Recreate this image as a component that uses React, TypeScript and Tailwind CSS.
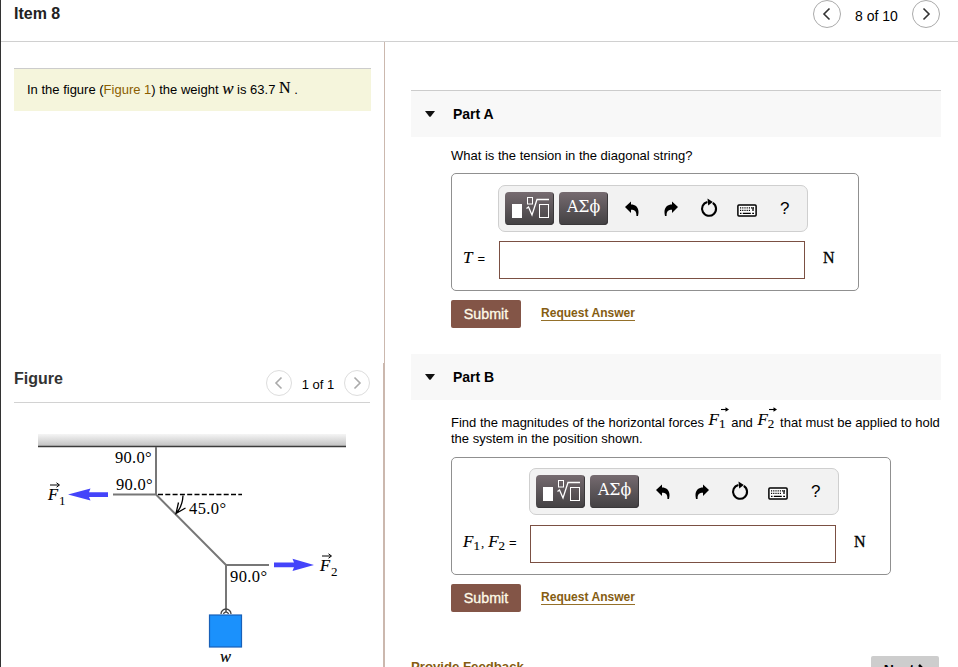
import type { ReactNode } from 'react';

const serif = "font-['Liberation_Serif',serif]";

function Chevron({ dir }: { dir: 'left' | 'right' }) {
  return (
    <svg width="12" height="14" viewBox="0 0 12 14" fill="none" stroke="currentColor" strokeWidth="1.6">
      <path d={dir === 'left' ? 'M8.5 1.5 L3 7 L8.5 12.5' : 'M3.5 1.5 L9 7 L3.5 12.5'} />
    </svg>
  );
}

function Toolbar() {
  const key =
    'h-[33px] w-[49px] rounded-[4px] bg-gradient-to-b from-[#766b70] to-[#434143] shadow-[inset_-1px_-1px_0_#3a383a] flex items-center justify-center';
  return (
    <div className="flex h-[47px] w-[310px] items-center rounded-[7px] border border-[#cfcfcf] bg-[#f2f2f2] pl-[6px]">
      <div className={key}>
        <svg width="49" height="33" viewBox="0 0 49 33" fill="none" stroke="#fff">
          <rect x="7" y="12" width="10" height="14" fill="#fff" stroke="none" />
          <rect x="22.5" y="5.5" width="5" height="6.5" />
          <path d="M21.5 16.5 L23.5 15 L27 23 L32 7.5 H44" strokeWidth="1.3" />
          <rect x="34.5" y="12.5" width="9" height="13" />
        </svg>
      </div>
      <div className={`ml-[5px] ${key}`}>
        <span className="-mt-[3px] font-['DejaVu_Serif_Condensed','DejaVu_Serif',serif] text-[17.5px] leading-none text-white">ΑΣϕ</span>
      </div>
      <svg className="ml-[17px]" width="14" height="16" viewBox="0 0 14 16">
        <path d="M0 6 L6 0.5 V3.5 C11 3.5 15 7 13 15 H11.4 C11.6 10.5 10 8.8 6 8.8 V12 Z" />
      </svg>
      <svg className="ml-[25px]" width="14" height="16" viewBox="0 0 14 16">
        <path d="M14 6 L8 0.5 V3.5 C3 3.5 -1 7 1 15 H2.6 C2.4 10.5 4 8.8 8 8.8 V12 Z" />
      </svg>
      <svg className="-mt-px ml-[22px]" width="18" height="20" viewBox="0 0 18 20">
        <path d="M12.8 4.9 A7 7 0 1 1 7.4 4" fill="none" stroke="#000" strokeWidth="2.1" />
        <path d="M7.5 0.6 L12.8 4 L8.2 7.6 Z" />
      </svg>
      <svg className="mt-[3px] ml-[19px]" width="20" height="13" viewBox="0 0 20 13">
        <rect x="0.9" y="0.9" width="18.2" height="11.2" rx="1" fill="#fff" stroke="#000" strokeWidth="1.5" />
        <path d="M3 3.8 H17 M3 6.4 H14" stroke="#000" strokeWidth="1.3" strokeDasharray="1.2 1" />
        <path d="M3 9.3 H4.5 M5.8 9.3 H13.8 M15.2 9.3 H17 M16 3.2 V7" stroke="#000" strokeWidth="1.3" />
      </svg>
      <span className="-mt-px ml-[23px] text-[17px] leading-none">?</span>
    </div>
  );
}

function PartHeader({ title, first }: { title: string; first?: boolean }) {
  return (
    <div className={`flex w-[530px] items-center bg-[#f8f8f8] pl-[14px] ${first ? 'h-[47px] border-t border-[#ccc]' : 'h-[46px]'}`}>
      <svg width="10" height="6" viewBox="0 0 10 6">
        <path d="M0 0 H10 L5.8 5.4 Q5 6 4.2 5.4 Z" fill="#111" />
      </svg>
      <h2 className="ml-[18px] text-[14px] leading-[16px] font-bold">{title}</h2>
    </div>
  );
}

function Answer({ label, wide }: { label: ReactNode; wide?: boolean }) {
  return (
    <>
      <div className={`ml-[40px] h-[118px] rounded-[5px] border border-[#909090] ${wide ? 'w-[440px] pt-[10px]' : 'w-[408px] pt-[11px]'}`}>
        <div className={wide ? 'ml-[77px]' : 'ml-[46px]'}>
          <Toolbar />
        </div>
        <div className={`flex items-center ${wide ? 'mt-[10px]' : 'mt-[9px]'}`}>
          <div className={`-mt-[3px] shrink-0 pl-[11px] whitespace-nowrap ${wide ? 'w-[78px]' : 'w-[47px]'}`}>{label}</div>
          <div className="h-[38px] w-[306px] shrink-0 border border-[#7b5043] bg-white" />
          <span className={`-mt-[5px] ml-[18px] text-[16px] leading-none [-webkit-text-stroke:0.3px_black] ${serif}`}>N</span>
        </div>
      </div>
      <div className="mt-[9px] ml-[40px] flex h-[28px] items-center">
        <button className="h-[28px] w-[70px] rounded-[2px] bg-[#835547] text-[14.3px] leading-none text-[#fffbe8] [-webkit-text-stroke:0.3px_#fffbe8]">Submit</button>
        <a className="-mt-px ml-[20px] border-b border-[#94702a] text-[12.05px] leading-[13px] font-bold whitespace-nowrap text-[#855d12]">Request Answer</a>
      </div>
    </>
  );
}

function MathVar({ name, sub }: { name: string; sub?: string }) {
  return (
    <span className={`text-[17px] leading-none [-webkit-text-stroke:0.15px_black] ${serif}`}>
      <i>{name}</i>
      {sub && <span className="relative top-[3px] text-[13px]">{sub}</span>}
    </span>
  );
}

function VectorVar({ sub }: { sub: string }) {
  return (
    <span className="relative mx-[1px] inline-block h-[12px] w-[18px]">
      <span className="absolute -top-[4px] left-0 leading-none whitespace-nowrap">
        <MathVar name="F" sub={sub} />
      </span>
      <svg className="absolute -top-[8px] left-[12px]" width="8" height="5" viewBox="0 0 8 5">
        <path d="M0 2.5 H6" stroke="#000" strokeWidth="1.1" />
        <path d="M4.5 0.2 L8 2.5 L4.5 4.8 Z" />
      </svg>
    </span>
  );
}

function Diagram() {
  return (
    <svg className="mt-[29px] ml-[23px] font-['Liberation_Serif',serif]" width="320" height="236" viewBox="37 432 320 236">
      <defs>
        <linearGradient id="ceiling" x1="0" y1="0" x2="0" y2="1">
          <stop offset="0" stopColor="#f5f5f5" />
          <stop offset="1" stopColor="#c2c2c2" />
        </linearGradient>
      </defs>
      <rect x="38" y="434" width="308" height="12" fill="url(#ceiling)" />
      <path d="M38 446.5 H346" stroke="#3c3c3c" strokeWidth="1.5" />
      <path d="M156 447 V495 M113 494.5 H156 L226 565 H269 M226 565 V612" fill="none" stroke="#777" strokeWidth="2" />
      <path d="M158 494.5 H242" stroke="#000" strokeWidth="1.4" strokeDasharray="5 2.3" />
      <path d="M183 495.5 Q182.5 506 176.5 513 M178.5 502.5 L176 513.5 L185.5 508" fill="none" stroke="#000" strokeWidth="1.3" />
      <path d="M108 492.2 H89 L90.5 488.5 L68 494.5 L90.5 500.5 L89 497 H108 Z" fill="#4444fa" />
      <path d="M274 562.5 H294 L292.5 558.7 L314 565 L292.5 571 L294 567.3 H274 Z" fill="#4444fa" />
      <path d="M221 614 A5 5 0 0 1 231 614 M223.5 614 A2.6 2.6 0 0 1 228.5 614" fill="none" stroke="#444" strokeWidth="1.3" />
      <rect x="209.5" y="615" width="32" height="32" fill="#1b91fc" stroke="#1860b8" strokeWidth="1.2" />
      <g fontSize="16.5">
        <text x="115" y="463" textLength="36.5">90.0°</text>
        <text x="116" y="490" textLength="36.5">90.0°</text>
        <text x="189" y="514" textLength="37">45.0°</text>
        <text x="230" y="581.5" textLength="37">90.0°</text>
      </g>
      <g fontStyle="italic" fontSize="16.5" stroke="#000" strokeWidth="0.2">
        <text x="48" y="500">F</text>
        <text x="320" y="571">F</text>
        <text x="220" y="662">w</text>
      </g>
      <text x="59" y="504.5" fontSize="13">1</text>
      <text x="331" y="576" fontSize="13">2</text>
      <path d="M50 485 H59 M56.5 482.8 L59.5 485 L56.5 487.2 M322 556 H331 M328.5 553.8 L331.5 556 L328.5 558.2" fill="none" stroke="#000" strokeWidth="1" />
    </svg>
  );
}

export default function App() {
  return (
    <div className="flex h-[667px] w-[958px] flex-col overflow-hidden border-l border-[#333] bg-white font-['Liberation_Sans',Arial,sans-serif] text-[13px] text-black">
      <header className="flex h-[42px] shrink-0 items-start border-b border-[#d0d0d0] pl-[13px]">
        <h1 className="mt-[5px] text-[16px] leading-[18px] font-bold text-[#222]">Item 8</h1>
        <div className="ml-auto flex items-center pr-[18px]">
          <button className="flex h-[28px] w-[28px] items-center justify-center rounded-full border border-[#aaa] text-[#333]">
            <Chevron dir="left" />
          </button>
          <span className="mt-[4px] w-[71px] text-center text-[14px] leading-none">8 of 10</span>
          <button className="flex h-[28px] w-[28px] items-center justify-center rounded-full border border-[#aaa] text-[#333]">
            <Chevron dir="right" />
          </button>
        </div>
      </header>
      <div className="flex h-[625px]">
        <aside className="flex w-[384px] shrink-0 flex-col">
          <div className="h-[321px] border-r border-[#cbb8ae] pt-[26px] pl-[13px]">
            <div className="flex h-[43px] w-[357px] items-center border-t border-[#ccc] bg-[#f5f5dc] pb-[2px] pl-[13px] whitespace-pre">
              <p className="leading-[16px]">
                In the figure (<a className="text-[#8b5e00]">Figure 1</a>) the weight <MathVar name="w" /> is 63.7{' '}
                <span className={`relative -top-[1px] text-[16px] leading-none [-webkit-text-stroke:0.15px_black] ${serif}`}>N</span> .
              </p>
            </div>
          </div>
          <div className="h-[304px] border-r-2 border-[#cbb8ae] pl-[13px]">
            <div className="flex h-[40px] w-[356px] items-center border-b border-[#d2d2d2]">
              <h2 className="-mt-[8px] text-[16px] font-bold text-[#333]">Figure</h2>
              <div className="ml-auto flex items-center">
                <button className="flex h-[26px] w-[26px] items-center justify-center rounded-full border border-[#ddd] text-[#aaa]">
                  <Chevron dir="left" />
                </button>
                <span className="mt-[4px] w-[52px] text-center leading-none">1 of 1</span>
                <button className="flex h-[26px] w-[26px] items-center justify-center rounded-full border border-[#ddd] text-[#aaa]">
                  <Chevron dir="right" />
                </button>
              </div>
            </div>
            <Diagram />
          </div>
        </aside>
        <main className="flex-1 overflow-hidden pt-[48px] pl-[26px]">
          <PartHeader title="Part A" first />
          <p className="mt-[11px] mb-[9px] ml-[40px] leading-[16px]">What is the tension in the diagonal string?</p>
          <Answer
            label={
              <>
                <MathVar name="T" />
                <span className="ml-[5px]">=</span>
              </>
            }
          />
          <div className="h-[26px]" />
          <PartHeader title="Part B" />
          <div className="mt-[15px] mb-[10px] ml-[40px] leading-[16px] whitespace-nowrap">
            <p className="h-[16px]">
              Find the magnitudes of the horizontal forces <VectorVar sub="1" /> and <VectorVar sub="2" /> that must be applied to hold
            </p>
            <p>the system in the position shown.</p>
          </div>
          <Answer
            wide
            label={
              <>
                <MathVar name="F" sub="1" />
                <span className={`mr-[4px] ml-[1px] ${serif}`}>,</span>
                <MathVar name="F" sub="2" />
                <span className="ml-[4px]">=</span>
              </>
            }
          />
          <footer className="mt-[44px] flex w-[528px] items-start justify-between">
            <a className="mt-[3px] text-[13.2px] leading-[16px] font-bold text-[#855d12]">Provide Feedback</a>
            <button className="flex h-[28px] w-[68px] items-center justify-center gap-1 rounded-[2px] bg-[#cdcdcd] text-[14px] font-bold">
              Next
              <svg width="8" height="12" viewBox="0 0 8 12" fill="none" stroke="#000" strokeWidth="2.5">
                <path d="M1 1 L6 6 L1 11" />
              </svg>
            </button>
          </footer>
        </main>
      </div>
    </div>
  );
}
